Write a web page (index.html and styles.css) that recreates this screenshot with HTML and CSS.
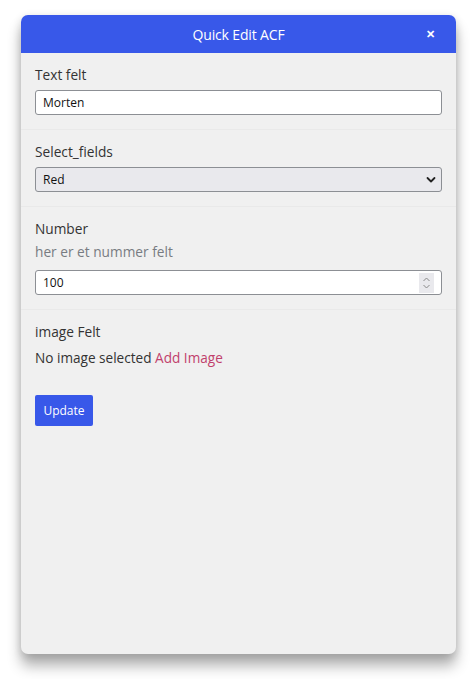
FILE: index.html
```html
<!DOCTYPE html>
<html lang="da">
<head>
<meta charset="utf-8">
<title>Quick Edit ACF</title>
<link rel="stylesheet" href="styles.css">
</head>
<body>
<div class="modal">
  <div class="modal-header">
    <span class="modal-title">Quick Edit ACF</span>
    <span class="modal-close">&#x2715;</span>
  </div>
  <div class="modal-body">
    <div class="field">
      <label class="field-label">Text felt</label>
      <div class="control">
        <input class="control-input" type="text" value="Morten">
      </div>
    </div>
    <div class="field">
      <label class="field-label">Select_fields</label>
      <div class="control control-select">
        <span class="control-value">Red</span>
        <svg class="chevron" width="10" height="8" viewBox="0 0 10 8"><path d="M1.5 2 L5 5.5 L8.5 2" fill="none" stroke="#222" stroke-width="1.8" stroke-linecap="round" stroke-linejoin="round"/></svg>
      </div>
    </div>
    <div class="field">
      <label class="field-label">Number</label>
      <p class="field-desc">her er et nummer felt</p>
      <div class="control control-number">
        <input class="control-input" type="text" value="100">
        <span class="spinner">
          <svg width="15" height="20" viewBox="0 0 15 20"><rect width="15" height="20" fill="#e9e9ed"/><path d="M4.5 8 L7.5 5 L10.5 8" fill="none" stroke="#8a8a8a" stroke-width="1"/><path d="M4.5 12 L7.5 15 L10.5 12" fill="none" stroke="#8a8a8a" stroke-width="1"/></svg>
        </span>
      </div>
    </div>
    <div class="field field-last">
      <label class="field-label">image Felt</label>
      <p class="image-line">No image selected <a class="image-add" href="#">Add Image</a></p>
    </div>
    <div class="actions">
      <button class="btn-update" type="button">Update</button>
    </div>
  </div>
</div>
</body>
</html>
```

FILE: styles.css
```css
html, body {
  margin: 0;
  padding: 0;
  background: #ffffff;
}
body {
  font-family: "Open Sans", "Noto Sans", "Liberation Sans", sans-serif;
  color: #333333;
  min-height: 679px;
}
.modal {
  margin: 15px 0 0 21px;
  width: 435px;
  height: 639px;
  background: #f0f0f0;
  border-radius: 7px;
  box-shadow: 0 12px 14px rgba(0, 0, 0, 0.3), 0 2px 8px rgba(0, 0, 0, 0.14);
  overflow: hidden;
  display: flex;
  flex-direction: column;
}
.modal-header {
  height: 38px;
  background: #3858e9;
  color: #ffffff;
  display: flex;
  align-items: center;
  justify-content: center;
  position: relative;
}
.modal-title {
  font-size: 14px;
  letter-spacing: -0.15px;
}
.modal-close {
  position: absolute;
  right: 21px;
  top: 11px;
  font-size: 11px;
  font-weight: 700;
  line-height: 16px;
}
.modal-body {
  display: flex;
  flex-direction: column;
}
.field {
  padding: 12px 14px 14px;
  border-bottom: 1px solid #e9e9e9;
  display: flex;
  flex-direction: column;
}
.field-last {
  border-bottom: none;
}
.field-label {
  font-size: 13.7px;
  line-height: 20px;
  color: #333333;
  margin-bottom: 5px;
}
.field-desc {
  margin: -2px 0 8px;
  font-size: 13.7px;
  line-height: 20px;
  color: #787c82;
}
.control {
  height: 25px;
  box-sizing: border-box;
  border: 1px solid #8c8f94;
  border-radius: 3px;
  background: #ffffff;
  display: flex;
  align-items: center;
}
.control-input {
  flex: 1;
  border: none;
  background: transparent;
  outline: none;
  font-family: "Open Sans", "Noto Sans", sans-serif;
  font-size: 12px;
  color: #111111;
  padding: 0 7px;
  height: 100%;
  min-width: 0;
}
.control-select {
  background: #e9e9ed;
  justify-content: space-between;
  padding: 0 5px 0 7px;
}
.control-value {
  font-size: 12px;
  color: #111111;
}
.chevron {
  display: block;
}
.spinner {
  display: flex;
  margin-right: 7px;
}
.spinner svg {
  display: block;
}
.image-line {
  margin: 1px 0 0;
  font-size: 13.6px;
  line-height: 20px;
  color: #333333;
}
.image-add {
  color: #c13f6c;
  text-decoration: none;
}
.actions {
  padding: 13px 14px;
  display: flex;
}
.btn-update {
  width: 58px;
  height: 31px;
  border: none;
  border-radius: 2px;
  background: #3858e9;
  color: #ffffff;
  font-family: "Open Sans", "Noto Sans", sans-serif;
  font-size: 12px;
  padding: 0;
}
```
